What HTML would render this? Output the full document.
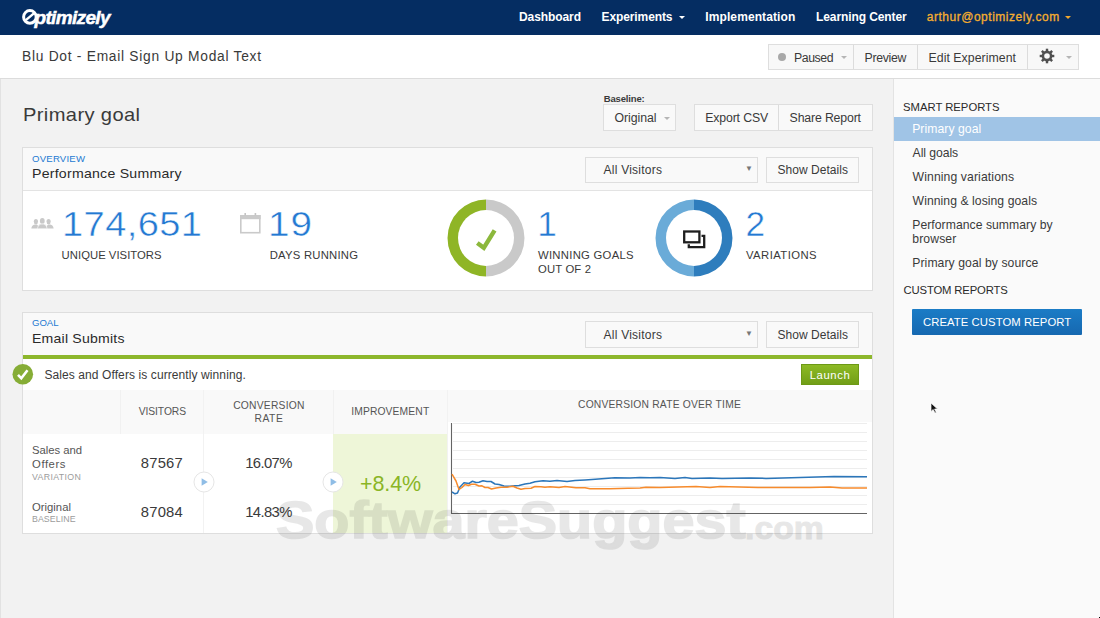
<!DOCTYPE html>
<html><head><meta charset="utf-8">
<style>
*{box-sizing:border-box;margin:0;padding:0}
html,body{width:1100px;height:618px;overflow:hidden;background:#f2f2f2;font-family:"Liberation Sans",sans-serif}
.a{position:absolute}
.t{position:absolute;line-height:1;white-space:pre}
.btn{position:absolute;background:#f9f9f9;border:1px solid #dedede}
.caret{position:absolute;width:0;height:0;border-left:3px solid transparent;border-right:3px solid transparent;border-top:3px solid #aaa}
</style></head><body>
<!-- nav -->
<div class="a" style="left:0;top:0;width:1100px;height:35px;background:#052d62"></div>
<!-- logo O -->
<svg class="a" style="left:20px;top:7px" width="20" height="20" viewBox="0 0 20 20">
  <circle cx="9.9" cy="9.9" r="6.3" fill="none" stroke="#fff" stroke-width="3"/>
  <path d="M5.8 13.2 L14.5 5.8" stroke="#fff" stroke-width="2.4"/>
</svg>
<div class="caret" style="left:678.5px;top:15.8px;border-top-color:#fff;border-left-width:3px;border-right-width:3px;border-top-width:3.5px"></div>
<div class="caret" style="left:1064.8px;top:15.8px;border-top-color:#f2a72c;border-top-width:3.5px"></div>

<!-- header -->
<div class="a" style="left:0;top:35px;width:1100px;height:44px;background:#fff;border-bottom:1px solid #dcdcdc"></div>
<div class="btn" style="left:768px;top:44px;width:311px;height:26px;background:#f8f8f8"></div>
<div class="a" style="left:853px;top:45px;width:1px;height:24px;background:#dcdcdc"></div>
<div class="a" style="left:917px;top:45px;width:1px;height:24px;background:#dcdcdc"></div>
<div class="a" style="left:1027px;top:45px;width:1px;height:24px;background:#dcdcdc"></div>
<div class="a" style="left:777.8px;top:52.6px;width:8.4px;height:8.4px;border-radius:50%;background:#a8a8a8"></div>
<div class="caret" style="left:840.5px;top:56px;border-top-color:#b5b5b5"></div>
<div class="caret" style="left:1065.5px;top:56px;border-top-color:#b5b5b5"></div>
<!-- gear -->
<svg class="a" style="left:1038.8px;top:48px" width="16" height="16" viewBox="0 0 16 16">
  <g fill="#505050"><rect x="6.8" y="0.7" width="2.4" height="3.5" transform="rotate(0 8 8)"/><rect x="6.8" y="0.7" width="2.4" height="3.5" transform="rotate(45 8 8)"/><rect x="6.8" y="0.7" width="2.4" height="3.5" transform="rotate(90 8 8)"/><rect x="6.8" y="0.7" width="2.4" height="3.5" transform="rotate(135 8 8)"/><rect x="6.8" y="0.7" width="2.4" height="3.5" transform="rotate(180 8 8)"/><rect x="6.8" y="0.7" width="2.4" height="3.5" transform="rotate(225 8 8)"/><rect x="6.8" y="0.7" width="2.4" height="3.5" transform="rotate(270 8 8)"/><rect x="6.8" y="0.7" width="2.4" height="3.5" transform="rotate(315 8 8)"/></g>
  <circle cx="8" cy="8" r="4.1" fill="none" stroke="#505050" stroke-width="2.6"/>
</svg>

<!-- main left border -->
<div class="a" style="left:0;top:79px;width:1px;height:539px;background:#e2e2e2"></div>

<!-- sidebar -->
<div class="a" style="left:893px;top:79px;width:207px;height:539px;background:#fafafa;border-left:1px solid #e3e3e3"></div>
<div class="a" style="left:894px;top:117px;width:206px;height:24px;background:#a0c4e6"></div>
<div class="a" style="left:912px;top:309px;width:170px;height:26px;background:linear-gradient(#1b7cc6,#1668b0);border-radius:1px"></div>

<!-- baseline + export -->
<div class="btn" style="left:603px;top:104px;width:73px;height:27px"></div>
<div class="caret" style="left:663.5px;top:117px;border-top-color:#b5b5b5"></div>
<div class="btn" style="left:694px;top:104px;width:179px;height:27px"></div>
<div class="a" style="left:778px;top:105px;width:1px;height:25px;background:#dcdcdc"></div>

<!-- panel 1 -->
<div class="a" style="left:22px;top:147px;width:851px;height:144px;background:#fff;border:1px solid #dedede"></div>
<div class="a" style="left:23px;top:148px;width:849px;height:43px;background:#f9f9f9;border-bottom:1px solid #e3e3e3"></div>
<div class="btn" style="left:585px;top:157px;width:173px;height:26px;background:#f9f9f9"></div>
<div class="a" style="left:745px;top:165px;font-size:8px;color:#777;line-height:1">&#9660;</div>
<div class="btn" style="left:766px;top:157px;width:93px;height:26px;background:#f9f9f9"></div>

<!-- people icon -->
<svg class="a" style="left:31px;top:217px" width="23" height="13" viewBox="0 0 23 13">
  <g fill="#c9c9c9">
    <ellipse cx="4.9" cy="4.6" rx="2.1" ry="2.7"/><path d="M0.3 11.6 Q0.8 8.3 3.8 7.6 L6 7.6 Q7.5 8.5 7.5 11.6Z"/>
    <ellipse cx="17.6" cy="4.6" rx="2.1" ry="2.7"/><path d="M15.5 11.6 Q15.5 8.5 17 7.6 L19.2 7.6 Q22.2 8.3 22.6 11.6Z"/>
    <ellipse cx="11.3" cy="3.9" rx="2.4" ry="2.9"/><path d="M6.3 11.8 Q6.8 7.8 9.8 7.1 L12.8 7.1 Q15.8 7.8 16.2 11.8Z" stroke="#fff" stroke-width="0.6"/>
  </g>
</svg>
<!-- calendar icon -->
<svg class="a" style="left:238px;top:212px" width="24" height="24" viewBox="0 0 24 24">
  <rect x="2.8" y="3.8" width="19" height="16.9" fill="none" stroke="#cacaca" stroke-width="1.6"/>
  <rect x="2" y="3" width="20.6" height="4.2" fill="#cacaca"/>
  <rect x="6.4" y="1" width="1.6" height="2.5" fill="#c4c4c4"/>
  <rect x="16.6" y="1" width="1.6" height="2.5" fill="#c4c4c4"/>
</svg>
<!-- donut 1 -->
<svg class="a" style="left:446px;top:198px" width="80" height="80" viewBox="0 0 80 80">
  <path d="M40 1.5 A38.5 38.5 0 0 0 40 78.5 Z" fill="#8fb526"/>
  <path d="M40 1.5 A38.5 38.5 0 0 1 40 78.5 Z" fill="#c9c9c9"/>
  <circle cx="40" cy="40" r="28" fill="#fff"/>
  <path d="M31.3 45 L37.8 49.8 L48.6 32.3" fill="none" stroke="#8cb83c" stroke-width="4.4"/>
</svg>
<!-- donut 2 -->
<svg class="a" style="left:654px;top:198px" width="80" height="80" viewBox="0 0 80 80">
  <path d="M40 1.5 A38.5 38.5 0 0 0 40 78.5 Z" fill="#6aabd8"/>
  <path d="M40 1.5 A38.5 38.5 0 0 1 40 78.5 Z" fill="#2e7dbd"/>
  <circle cx="40" cy="40" r="28" fill="#fff"/>
  <rect x="30.2" y="33.5" width="15.2" height="10.8" fill="none" stroke="#1e1e1e" stroke-width="2.3"/>
  <path d="M47.5 37.8 L50.2 37.8 L50.2 49.2 L34.8 49.2 L34.8 46.3" fill="none" stroke="#1e1e1e" stroke-width="2.3"/>
</svg>

<!-- panel 2 -->
<div class="a" style="left:22px;top:312px;width:851px;height:222px;background:#fff;border:1px solid #dedede"></div>
<div class="a" style="left:23px;top:313px;width:849px;height:42px;background:#f9f9f9"></div>
<div class="btn" style="left:585px;top:321px;width:173px;height:27px;background:#f9f9f9"></div>
<div class="a" style="left:745px;top:330px;font-size:8px;color:#777;line-height:1">&#9660;</div>
<div class="btn" style="left:766px;top:321px;width:93px;height:27px;background:#f9f9f9"></div>
<div class="a" style="left:23px;top:355px;width:849px;height:4px;background:#8db72c"></div>
<svg class="a" style="left:12px;top:364px" width="22" height="22" viewBox="0 0 22 22">
  <circle cx="10.8" cy="10.3" r="10.3" fill="#86ad36"/>
  <path d="M6 10.8 L9.3 14.3 L15.5 6.3" fill="none" stroke="#fff" stroke-width="2.6"/>
</svg>
<div class="a" style="left:801px;top:364px;width:58px;height:21px;background:linear-gradient(#8dba25,#719e17);border:1px solid #6d9916"></div>
<!-- table header bg -->
<div class="a" style="left:23px;top:390px;width:424px;height:44px;background:#f9f9f9"></div>
<div class="a" style="left:447px;top:390px;width:425px;height:32px;background:#f9f9f9"></div>
<div class="a" style="left:120px;top:390px;width:1px;height:44px;background:#f1f1f1"></div>
<div class="a" style="left:203px;top:390px;width:1px;height:143px;background:#f2f2f2"></div>
<div class="a" style="left:333px;top:390px;width:1px;height:44px;background:#f1f1f1"></div>
<div class="a" style="left:447px;top:390px;width:1px;height:143px;background:#f2f2f2"></div>
<div class="a" style="left:333px;top:434px;width:114px;height:99px;background:#eef6d8"></div>
<!-- play circles -->
<svg class="a" style="left:193px;top:471px" width="22" height="22" viewBox="0 0 22 22">
  <circle cx="11" cy="11" r="10" fill="#fff" stroke="#e6e6e6" stroke-width="1"/>
  <path d="M8.6 7.3 L14.8 11 L8.6 14.7Z" fill="#8fbde6"/>
</svg>
<svg class="a" style="left:322px;top:471px" width="22" height="22" viewBox="0 0 22 22">
  <circle cx="11" cy="11" r="10" fill="#fff" stroke="#e6e6e6" stroke-width="1"/>
  <path d="M8.6 7.3 L14.8 11 L8.6 14.7Z" fill="#8fbde6"/>
</svg>
<!-- chart -->
<svg class="a" style="left:447px;top:418px" width="425" height="100" viewBox="447 418 425 100">
  <path d="M453 423.5H867M453 432.5H867M453 441.5H867M453 450.5H867M453 459.5H867M453 468.5H867M453 477.5H867M453 486.5H867M453 495.5H867M453 504.5H867" stroke="#ededed" stroke-width="1" fill="none"/>
  <path d="M451.5 423V513.5H867" fill="none" stroke="#646464" stroke-width="1.1"/>
  <path d="M452 492 L455 493.8 L457.5 493 L460 487 L464 482.8 L469 483.5 L472.5 481.2 L476 482.5 L479 482.2 L483 480.8 L487 481.5 L491 481.5 L495 484 L499 484.5 L504 486 L510 486.2 L515 485.8 L519 485.5 L525 484 L530 483.2 L535 481.8 L543 480.8 L550 481.2 L557 480.5 L567 481.5 L575 480.5 L585 480 L592 479.5 L605 478.5 L615 477.8 L630 478 L640 477.5 L650 477.8 L660 477.5 L675 478.4 L685 477.6 L692 478.4 L710 478 L722 478.6 L750 478 L766 478.4 L800 477.6 L834 476.6 L867 476.8" fill="none" stroke="#2b76ba" stroke-width="1.5" stroke-linejoin="round"/>
  <path d="M452 474.2 L456 481 L459 489.5 L462 487.5 L465 484.5 L468.5 485.5 L471.5 484.2 L475 484.2 L479 486 L482 485.8 L485 487.5 L488 487.5 L491.5 489 L496 488 L501 487.2 L507 487.2 L513 486.2 L517 488 L521 489.2 L525 488.5 L531 488.2 L535 486.5 L541 486.8 L545 487.2 L550 486.7 L559 487.5 L565 486.5 L576 487.8 L585 487.8 L590 488.8 L610 488.8 L628 488.2 L640 488 L646 487.2 L660 487.5 L696 486.6 L710 487.4 L720 486.6 L758 487.4 L810 487.6 L830 487 L842 488 L867 488" fill="none" stroke="#f78b2c" stroke-width="1.5" stroke-linejoin="round"/>
</svg>

<div class="a" style="left:1099px;top:617px;width:1px;height:1px;background:#000"></div>
<!-- cursor -->
<svg class="a" style="left:930px;top:402px" width="10" height="12" viewBox="0 0 10 12">
  <path d="M1 1 L1 9.5 L3.2 7.5 L5 11 L6.3 10.4 L4.6 7 L7.5 7 Z" fill="#111" stroke="#fff" stroke-width="0.7"/>
</svg>
<div class="t" style="left:519.0px;top:11.44px;font-size:12px;color:#fff;font-weight:bold;letter-spacing:-0.086px;">Dashboard</div>
<div class="t" style="left:601.5px;top:11.44px;font-size:12px;color:#fff;font-weight:bold;letter-spacing:-0.103px;">Experiments</div>
<div class="t" style="left:705.3px;top:11.44px;font-size:12px;color:#fff;font-weight:bold;letter-spacing:0.101px;">Implementation</div>
<div class="t" style="left:816.0px;top:11.44px;font-size:12px;color:#fff;font-weight:bold;letter-spacing:-0.094px;">Learning Center</div>
<div class="t" style="left:926.7px;top:11.44px;font-size:12px;color:#f5ae2f;letter-spacing:0.525px;-webkit-text-stroke:0.3px #f5ae2f;">arthur@optimizely.com</div>
<div class="t" style="left:34.5px;top:8.22px;font-size:19px;color:#fff;font-weight:bold;font-style:italic;letter-spacing:-0.664px;-webkit-text-stroke:0.5px #fff;">ptimizely</div>
<div class="t" style="left:22.0px;top:49.52px;font-size:13.8px;color:#3a3a3a;letter-spacing:0.720px;">Blu Dot - Email Sign Up Modal Text</div>
<div class="t" style="left:794.0px;top:51.89px;font-size:12.3px;color:#3a3a3a;letter-spacing:-0.444px;">Paused</div>
<div class="t" style="left:864.5px;top:51.89px;font-size:12.3px;color:#3a3a3a;letter-spacing:-0.292px;">Preview</div>
<div class="t" style="left:928.5px;top:51.89px;font-size:12.3px;color:#3a3a3a;letter-spacing:0.049px;">Edit Experiment</div>
<div class="t" style="left:23.3px;top:104.52px;font-size:19px;color:#3a3a3a;letter-spacing:0.355px;transform-origin:0 0;transform:scaleX(1.0582);">Primary goal</div>
<div class="t" style="left:603.7px;top:94.06px;font-size:9.5px;color:#3a3a3a;font-weight:bold;letter-spacing:-0.156px;">Baseline:</div>
<div class="t" style="left:614.5px;top:111.89px;font-size:12.3px;color:#3a3a3a;letter-spacing:-0.054px;">Original</div>
<div class="t" style="left:705.2px;top:111.89px;font-size:12.3px;color:#3a3a3a;letter-spacing:-0.139px;">Export CSV</div>
<div class="t" style="left:789.6px;top:111.89px;font-size:12.3px;color:#3a3a3a;letter-spacing:-0.158px;">Share Report</div>
<div class="t" style="left:32.0px;top:153.87px;font-size:9.6px;color:#2479d2;letter-spacing:0.208px;">OVERVIEW</div>
<div class="t" style="left:32.3px;top:167.17px;font-size:13.5px;color:#2a2a2a;letter-spacing:0.227px;transform-origin:0 0;transform:scaleX(1.0463);">Performance Summary</div>
<div class="t" style="left:603.5px;top:163.64px;font-size:12px;color:#3a3a3a;letter-spacing:0.246px;">All Visitors</div>
<div class="t" style="left:777.5px;top:164.14px;font-size:12px;color:#3a3a3a;letter-spacing:0.043px;">Show Details</div>
<div class="t" style="left:62.0px;top:205.92px;font-size:35.3px;color:#2479d2;letter-spacing:0.384px;transform-origin:0 0;transform:scaleX(1.0778);-webkit-text-stroke:0.5px #fff;">174,651</div>
<div class="t" style="left:61.6px;top:250.23px;font-size:11.3px;color:#3a3a3a;letter-spacing:0.028px;">UNIQUE VISITORS</div>
<div class="t" style="left:268.0px;top:205.92px;font-size:35.3px;color:#2479d2;letter-spacing:0.864px;transform-origin:0 0;transform:scaleX(1.0965);-webkit-text-stroke:0.5px #fff;">19</div>
<div class="t" style="left:269.7px;top:250.23px;font-size:11.3px;color:#3a3a3a;letter-spacing:0.229px;">DAYS RUNNING</div>
<div class="t" style="left:537.3px;top:205.92px;font-size:35.3px;color:#2479d2;-webkit-text-stroke:0.5px #fff;">1</div>
<div class="t" style="left:538.0px;top:249.83px;font-size:11.3px;color:#3a3a3a;letter-spacing:0.277px;">WINNING GOALS</div>
<div class="t" style="left:538.0px;top:264.03px;font-size:11.3px;color:#3a3a3a;letter-spacing:0.158px;">OUT OF 2</div>
<div class="t" style="left:745.5px;top:205.92px;font-size:35.3px;color:#2479d2;-webkit-text-stroke:0.5px #fff;">2</div>
<div class="t" style="left:746.0px;top:249.83px;font-size:11.3px;color:#3a3a3a;letter-spacing:0.417px;">VARIATIONS</div>
<div class="t" style="left:32.0px;top:317.87px;font-size:9.6px;color:#2479d2;letter-spacing:-0.057px;">GOAL</div>
<div class="t" style="left:32.4px;top:332.17px;font-size:13.5px;color:#2a2a2a;letter-spacing:0.199px;transform-origin:0 0;transform:scaleX(1.0432);">Email Submits</div>
<div class="t" style="left:603.5px;top:328.64px;font-size:12px;color:#3a3a3a;letter-spacing:0.246px;">All Visitors</div>
<div class="t" style="left:777.5px;top:329.14px;font-size:12px;color:#3a3a3a;letter-spacing:0.043px;">Show Details</div>
<div class="t" style="left:44.4px;top:368.94px;font-size:12px;color:#3a3a3a;letter-spacing:0.095px;">Sales and Offers is currently winning.</div>
<div class="t" style="left:809.7px;top:369.53px;font-size:11.3px;color:#fff;letter-spacing:0.588px;">Launch</div>
<div class="t" style="left:138.8px;top:407.48px;font-size:10.3px;color:#555;letter-spacing:-0.096px;">VISITORS</div>
<div class="t" style="left:233.2px;top:401.08px;font-size:10.3px;color:#555;letter-spacing:0.218px;">CONVERSION</div>
<div class="t" style="left:254.4px;top:413.88px;font-size:10.3px;color:#555;letter-spacing:0.566px;">RATE</div>
<div class="t" style="left:351.2px;top:407.48px;font-size:10.3px;color:#555;letter-spacing:0.133px;">IMPROVEMENT</div>
<div class="t" style="left:578.0px;top:400.28px;font-size:10.3px;color:#555;letter-spacing:0.195px;">CONVERSION RATE OVER TIME</div>
<div class="t" style="left:32.0px;top:445.03px;font-size:11.3px;color:#555;letter-spacing:-0.031px;">Sales and</div>
<div class="t" style="left:32.0px;top:459.03px;font-size:11.3px;color:#555;letter-spacing:0.588px;">Offers</div>
<div class="t" style="left:32.0px;top:472.75px;font-size:8.8px;color:#9c9c9c;letter-spacing:0.336px;">VARIATION</div>
<div class="t" style="left:32.0px;top:502.23px;font-size:11.3px;color:#555;">Original</div>
<div class="t" style="left:32.0px;top:515.15px;font-size:8.8px;color:#9c9c9c;letter-spacing:0.067px;">BASELINE</div>
<div class="t" style="left:140.8px;top:456.07px;font-size:14.8px;color:#3a3a3a;letter-spacing:0.211px;">87567</div>
<div class="t" style="left:140.8px;top:505.27px;font-size:14.8px;color:#3a3a3a;letter-spacing:0.211px;">87084</div>
<div class="t" style="left:245.2px;top:456.07px;font-size:14.8px;color:#3a3a3a;letter-spacing:-0.597px;">16.07%</div>
<div class="t" style="left:245.2px;top:505.27px;font-size:14.8px;color:#3a3a3a;letter-spacing:-0.597px;">14.83%</div>
<div class="t" style="left:360.0px;top:473.60px;font-size:21.5px;color:#8ab526;letter-spacing:-0.091px;">+8.4%</div>
<div class="t" style="left:903.1px;top:101.93px;font-size:11.3px;color:#2a2a2a;letter-spacing:-0.024px;">SMART REPORTS</div>
<div class="t" style="left:912.2px;top:123.47px;font-size:12.2px;color:#fff;letter-spacing:0.054px;">Primary goal</div>
<div class="t" style="left:912.6px;top:146.97px;font-size:12.2px;color:#3a3a3a;letter-spacing:-0.060px;">All goals</div>
<div class="t" style="left:912.6px;top:171.17px;font-size:12.2px;color:#3a3a3a;letter-spacing:0.107px;">Winning variations</div>
<div class="t" style="left:912.6px;top:194.97px;font-size:12.2px;color:#3a3a3a;letter-spacing:0.052px;">Winning &amp; losing goals</div>
<div class="t" style="left:912.3px;top:219.07px;font-size:12.2px;color:#3a3a3a;letter-spacing:0.037px;">Performance summary by</div>
<div class="t" style="left:912.3px;top:233.27px;font-size:12.2px;color:#3a3a3a;letter-spacing:0.107px;">browser</div>
<div class="t" style="left:912.3px;top:257.27px;font-size:12.2px;color:#3a3a3a;letter-spacing:0.069px;">Primary goal by source</div>
<div class="t" style="left:903.6px;top:284.93px;font-size:11.3px;color:#2a2a2a;letter-spacing:-0.161px;">CUSTOM REPORTS</div>
<div class="t" style="left:923.0px;top:317.03px;font-size:11.3px;color:#fff;letter-spacing:0.069px;">CREATE CUSTOM REPORT</div>
<!-- watermark -->
<div class="a" style="left:0;top:0;width:1100px;height:618px;opacity:0.1">
<div class="t" style="left:276px;top:494px;font-size:52.5px;font-weight:bold;color:#222;-webkit-text-stroke:1.6px #222;transform-origin:0 0;transform:scaleX(1.095)">SoftwareSuggest</div>
<div class="t" style="left:745px;top:512px;font-size:32px;font-weight:bold;color:#222;-webkit-text-stroke:1px #222;transform-origin:0 0;transform:scaleX(1.055)">.com</div>
</div>
</body></html>
